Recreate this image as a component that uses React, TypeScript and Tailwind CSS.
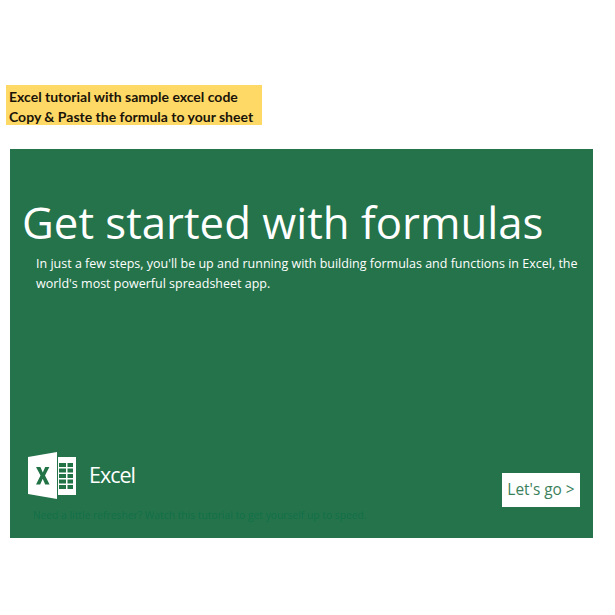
const rows = [11, 16.5, 22, 27.5, 33];

function ExcelLogo() {
  return (
    <svg width="48" height="47" viewBox="0 0 48 47">
      <path d="M0 5 L29 0 V47 L0 42 Z" fill="#fff" />
      <path d="M8 15 H12.4 L14.8 20.6 L17.2 15 H21.4 L17 23.5 L21.6 32.5 H17.2 L14.7 26.8 L12.2 32.5 H8 L12.5 23.5 Z" fill="#217346" />
      <path d="M30 5 H48 V43 H30 Z" fill="#fff" />
      {rows.map((y) => (
        <g key={y} fill="#217346">
          <rect x="31" y={y} width="7" height="4" />
          <rect x="39.5" y={y} width="5.5" height="4" />
        </g>
      ))}
    </svg>
  );
}

export default function App() {
  return (
    <div className="h-[615px] w-[615px] overflow-hidden bg-white pt-[85px] font-['Open_Sans',sans-serif]">
      <div className="ml-[6px] h-[40px] w-[256px] bg-[#ffd966] pl-[3px] pt-[2px] font-['Lato',sans-serif] text-[14px] font-bold leading-[20px] text-[#1a1408]">
        <p>Excel tutorial with sample excel code</p>
        <p>Copy &amp; Paste the formula to your sheet</p>
      </div>

      <div className="ml-[10px] mt-[24px] flex h-[389px] w-[583px] flex-col bg-[#24734a] text-white">
        <h1 className="ml-[12px] mt-[43px] whitespace-nowrap text-[43.75px] font-normal leading-[60px]">
          Get started with formulas
        </h1>
        <p className="ml-[26px] mt-[2px] w-[550px] text-[12.5px] leading-[20px]">
          In just a few steps, you'll be up and running with building formulas and functions in Excel, the world's most powerful spreadsheet app.
        </p>

        <div className="ml-[18px] mr-[13px] mt-auto flex items-start justify-between">
          <div className="flex items-center gap-[13px]">
            <ExcelLogo />
            <span className="text-[21.5px] font-normal tracking-[-1px]">Excel</span>
          </div>
          <button className="mt-[21px] h-[34px] w-[78px] bg-white text-[15.4px] text-[#3b7f5b]">
            Let's go &gt;
          </button>
        </div>

        <p className="mb-[16px] ml-[23px] mt-[1px] whitespace-nowrap text-[10.3px] leading-[14px] text-[#12704a] blur-[0.5px]">
          Need a little refresher? Watch this tutorial to get yourself up to speed.
        </p>
      </div>
    </div>
  );
}
